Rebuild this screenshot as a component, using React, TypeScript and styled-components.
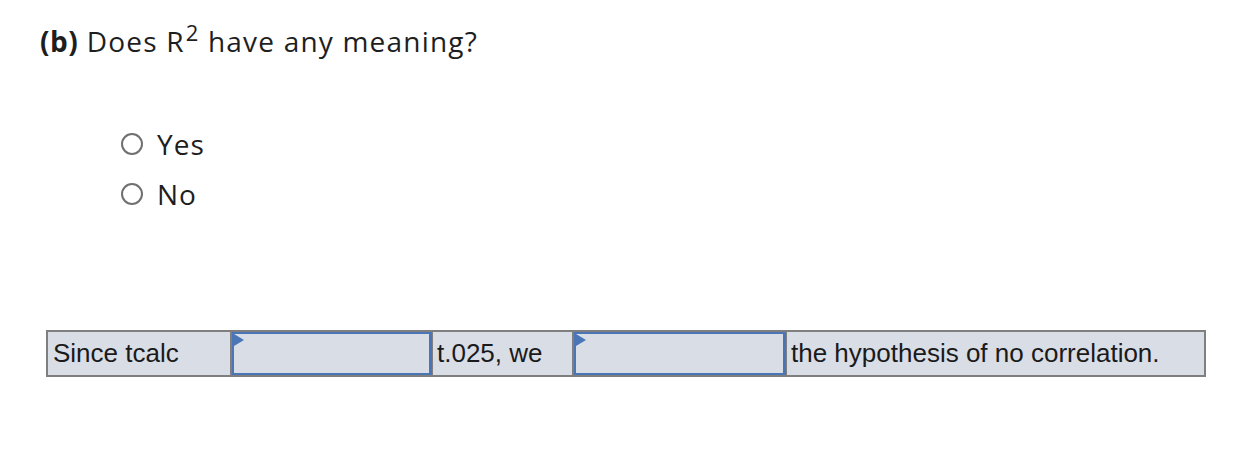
import React, { useState } from 'react';
import styled, { createGlobalStyle } from 'styled-components';

const GlobalStyle = createGlobalStyle`
  body {
    margin: 0;
    background: #ffffff;
  }
`;

const Page = styled.div`
  width: 1242px;
  height: 450px;
  box-sizing: border-box;
  padding: 23px 0 0 40px;
  font-family: 'Open Sans', 'Lato', sans-serif;
  color: #1e1e1e;
`;

const Question = styled.div`
  font-size: 28px;
  line-height: 36px;
  letter-spacing: 1.2px;
  b {
    font-weight: 700;
    letter-spacing: 0.5px;
  }
  sup {
    font-size: 22px;
    line-height: 0;
    vertical-align: 11px;
    margin-left: 1px;
  }
`;

const Options = styled.div`
  margin: 67px 0 0 81px;
  display: flex;
  flex-direction: column;
  gap: 14px;
`;

const Option = styled.label`
  display: flex;
  align-items: center;
  gap: 14px;
  font-size: 28px;
  line-height: 36px;
  letter-spacing: 1px;
  cursor: pointer;
`;

const Circle = styled.span<{ checked: boolean }>`
  width: 18px;
  height: 18px;
  border: 2px solid #707070;
  border-radius: 50%;
  display: flex;
  align-items: center;
  justify-content: center;
  &::after {
    content: '';
    width: 10px;
    height: 10px;
    border-radius: 50%;
    background: ${p => (p.checked ? '#333' : 'transparent')};
  }
`;

const Table = styled.div`
  margin: 118px 0 0 6px;
  width: 1160px;
  height: 47px;
  box-sizing: border-box;
  display: flex;
  border: 2px solid #7f7f7f;
  background: #d9dde6;
  font-family: 'Liberation Sans', Arial, sans-serif;
  font-size: 26px;
  color: #1a1a1a;
`;

const TextCell = styled.div<{ width?: number }>`
  box-sizing: border-box;
  ${p => (p.width ? `width: ${p.width}px;` : 'flex: 1;')}
  display: flex;
  align-items: center;
  padding: 0 5px;
  white-space: nowrap;
  border-right: 2px solid #7f7f7f;
  &:last-child {
    border-right: none;
  }
`;

const DropCell = styled.div<{ width: number }>`
  box-sizing: border-box;
  width: ${p => p.width}px;
  position: relative;
  border: 2px solid #4a76b8;
  border-right-width: 3px;
  & + ${TextCell} {
    border-left: 1px solid #7f7f7f;
    padding-left: 4px;
  }
`;

const Marker = styled.span`
  position: absolute;
  left: 0;
  top: 0;
  width: 0;
  height: 0;
  border-top: 6px solid transparent;
  border-bottom: 6px solid transparent;
  border-left: 10px solid #4a76b8;
`;

export default function App() {
  const [choice, setChoice] = useState<string | null>(null);
  return (
    <Page>
      <GlobalStyle />
      <Question>
        <b>(b)</b> Does R<sup>2</sup> have any meaning?
      </Question>
      <Options>
        {['Yes', 'No'].map(o => (
          <Option key={o} onClick={() => setChoice(o)}>
            <Circle checked={choice === o} />
            {o}
          </Option>
        ))}
      </Options>
      <Table>
        <TextCell width={184}>Since tcalc</TextCell>
        <DropCell width={200}>
          <Marker />
        </DropCell>
        <TextCell width={142}>t.025, we</TextCell>
        <DropCell width={212}>
          <Marker />
        </DropCell>
        <TextCell>the hypothesis of no correlation.</TextCell>
      </Table>
    </Page>
  );
}
